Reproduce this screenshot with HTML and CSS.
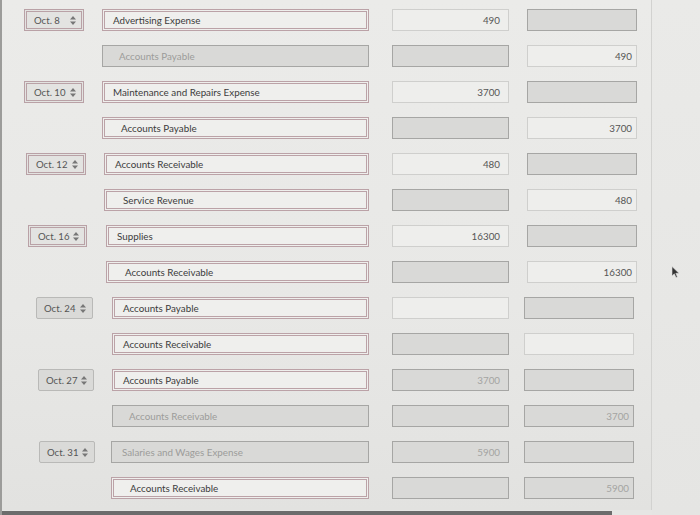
FILE: index.html
```html
<!DOCTYPE html>
<html>
<head>
<meta charset="utf-8">
<link rel="stylesheet" href="styles.css">
</head>
<body>
<div class="screen">
  <div class="panel">
    <div class="rows">
      <div class="row">
        <div class="dcell"><div class="date pink">Oct. 8<span class="arr"><svg width="6" height="9" viewBox="0 0 6 9"><path d="M3 0L6 3.5H0Z M3 9L6 5.5H0Z"/></svg></span></div></div>
        <div class="acct pink">Advertising Expense</div>
        <div class="amt light">490</div>
        <div class="amt grey"></div>
      </div>
      <div class="row">
        <div class="dcell"></div>
        <div class="acct grey ind faded">Accounts Payable</div>
        <div class="amt grey"></div>
        <div class="amt light">490</div>
      </div>
      <div class="row">
        <div class="dcell"><div class="date pink">Oct. 10<span class="arr"><svg width="6" height="9" viewBox="0 0 6 9"><path d="M3 0L6 3.5H0Z M3 9L6 5.5H0Z"/></svg></span></div></div>
        <div class="acct pink">Maintenance and Repairs Expense</div>
        <div class="amt light">3700</div>
        <div class="amt grey"></div>
      </div>
      <div class="row">
        <div class="dcell"></div>
        <div class="acct pink ind">Accounts Payable</div>
        <div class="amt grey"></div>
        <div class="amt light">3700</div>
      </div>
      <div class="row s1">
        <div class="dcell"><div class="date pink">Oct. 12<span class="arr"><svg width="6" height="9" viewBox="0 0 6 9"><path d="M3 0L6 3.5H0Z M3 9L6 5.5H0Z"/></svg></span></div></div>
        <div class="acct pink">Accounts Receivable</div>
        <div class="amt light">480</div>
        <div class="amt grey"></div>
      </div>
      <div class="row s1">
        <div class="dcell"></div>
        <div class="acct pink ind">Service Revenue</div>
        <div class="amt grey"></div>
        <div class="amt light">480</div>
      </div>
      <div class="row s2">
        <div class="dcell"><div class="date pink">Oct. 16<span class="arr"><svg width="6" height="9" viewBox="0 0 6 9"><path d="M3 0L6 3.5H0Z M3 9L6 5.5H0Z"/></svg></span></div></div>
        <div class="acct pink">Supplies</div>
        <div class="amt light">16300</div>
        <div class="amt grey"></div>
      </div>
      <div class="row s2">
        <div class="dcell"></div>
        <div class="acct pink ind">Accounts Receivable</div>
        <div class="amt grey"></div>
        <div class="amt light">16300</div>
      </div>
      <div class="row s3">
        <div class="dcell"><div class="date plain">Oct. 24<span class="arr"><svg width="6" height="9" viewBox="0 0 6 9"><path d="M3 0L6 3.5H0Z M3 9L6 5.5H0Z"/></svg></span></div></div>
        <div class="acct pink">Accounts Payable</div>
        <div class="amt light"></div>
        <div class="amt grey"></div>
      </div>
      <div class="row s3">
        <div class="dcell"></div>
        <div class="acct pink">Accounts Receivable</div>
        <div class="amt grey"></div>
        <div class="amt light"></div>
      </div>
      <div class="row s4">
        <div class="dcell"><div class="date plain">Oct. 27<span class="arr"><svg width="6" height="9" viewBox="0 0 6 9"><path d="M3 0L6 3.5H0Z M3 9L6 5.5H0Z"/></svg></span></div></div>
        <div class="acct pink">Accounts Payable</div>
        <div class="amt grey faded">3700</div>
        <div class="amt grey"></div>
      </div>
      <div class="row s4">
        <div class="dcell"></div>
        <div class="acct grey ind faded">Accounts Receivable</div>
        <div class="amt grey"></div>
        <div class="amt grey faded">3700</div>
      </div>
      <div class="row s5">
        <div class="dcell"><div class="date plain">Oct. 31<span class="arr"><svg width="6" height="9" viewBox="0 0 6 9"><path d="M3 0L6 3.5H0Z M3 9L6 5.5H0Z"/></svg></span></div></div>
        <div class="acct grey faded">Salaries and Wages Expense</div>
        <div class="amt grey faded">5900</div>
        <div class="amt grey"></div>
      </div>
      <div class="row s5">
        <div class="dcell"></div>
        <div class="acct pink ind">Accounts Receivable</div>
        <div class="amt grey"></div>
        <div class="amt grey faded">5900</div>
      </div>
    </div>
    <div class="cursor"><svg width="9" height="12" viewBox="0 0 9 12"><path d="M1 0.5V10L3.3 7.8L5 11.5L6.4 10.9L4.8 7.3H8Z" fill="#333" stroke="#ddd" stroke-width="0.6"/></svg></div>
  </div>
  <div class="side"></div>
  <div class="bottombar"></div>
</div>
</body>
</html>
```

FILE: styles.css
```css
* { box-sizing: border-box; }
html, body {
  margin: 0;
  padding: 0;
  width: 700px;
  height: 515px;
  overflow: hidden;
  background: #e6e6e4;
  font-family: Lato, "Open Sans", "Liberation Sans", sans-serif;
  font-size: 9.8px;
  color: #3a3a3a;
}
.screen {
  position: relative;
  display: flex;
  width: 700px;
  height: 515px;
  border-left: 2px solid #9c9c9a;
}
.panel {
  position: relative;
  width: 650px;
  height: 510px;
  background: linear-gradient(180deg, #ebebe9 0%, #e8e8e6 60%, #e2e2e0 100%);
  border-right: 1px solid #d2d2d0;
}
.side {
  flex: 1;
  background: linear-gradient(180deg, #eaeae8 0%, #e5e5e3 100%);
}
.rows {
  display: flex;
  flex-direction: column;
  gap: 14px;
  padding: 9px 0 0 22px;
}
.row {
  display: flex;
  align-items: center;
  height: 22px;
}
.dcell {
  width: 76px;
  height: 22px;
  flex: none;
}
.date {
  width: 60px;
  height: 22px;
  display: flex;
  align-items: center;
  justify-content: space-between;
  padding: 0 5px 0 7px;
  font-size: 9.6px;
  color: #555;
  white-space: nowrap;
}
.s1 .date { margin-left: 2px; }
.s2 .date { margin-left: 4px; width: 59px; }
.s3 .date { margin-left: 12px; width: 57px; }
.s4 .date { margin-left: 14px; width: 56px; }
.s5 .date { margin-left: 15px; width: 56px; }
.date.pink {
  border: 3px double #b9a1a6;
  background: #e3e3e1;
}
.date.plain {
  border: 1px solid #b9b9b7;
  background: #dadad8;
  border-radius: 2px;
  padding: 0 6px 0 7px;
}
.arr { display: flex; margin-left: 2px; flex: none; }
.arr svg { fill: #777; }
.acct {
  margin-left: 2px;
  width: 267px;
  height: 22px;
  flex: none;
  display: flex;
  align-items: center;
  padding-left: 8px;
  color: #3c3c3c;
  white-space: nowrap;
}
.s1 .acct { margin-left: 4px; width: 265px; }
.s2 .acct { margin-left: 6px; width: 263px; }
.s3 .acct { margin-left: 12px; width: 257px; }
.s4 .acct { margin-left: 12px; width: 257px; }
.s5 .acct { margin-left: 11px; width: 258px; }
.acct.ind { padding-left: 16px; }
.pink {
  border: 3px double #bba2a7;
  background: #efefed;
}
.grey {
  border: 1px solid #a6a6a4;
  background: #d9d9d7;
}
.light {
  border: 1px solid #cfcfcd;
  background: #eeeeec;
}
.faded { color: #9c9c9a; }
.acct.grey { padding-left: 10px; }
.acct.grey.ind { padding-left: 16px; }
.amt {
  height: 22px;
  flex: none;
  display: flex;
  align-items: center;
  justify-content: flex-end;
  padding-right: 8px;
  font-size: 9.8px;
  color: #555;
}
.amt.faded { color: #a4a4a2; }
.acct + .amt { margin-left: 23px; width: 117px; }
.amt + .amt { margin-left: 18px; width: 110px; padding-right: 4px; }
.s3 .amt + .amt, .s4 .amt + .amt, .s5 .amt + .amt { margin-left: 15px; }
.cursor {
  position: absolute;
  left: 669px;
  top: 266px;
}
.bottombar {
  position: absolute;
  left: 0;
  bottom: 0;
  width: 610px;
  height: 4px;
  background: #6c6c6c;
}
```
